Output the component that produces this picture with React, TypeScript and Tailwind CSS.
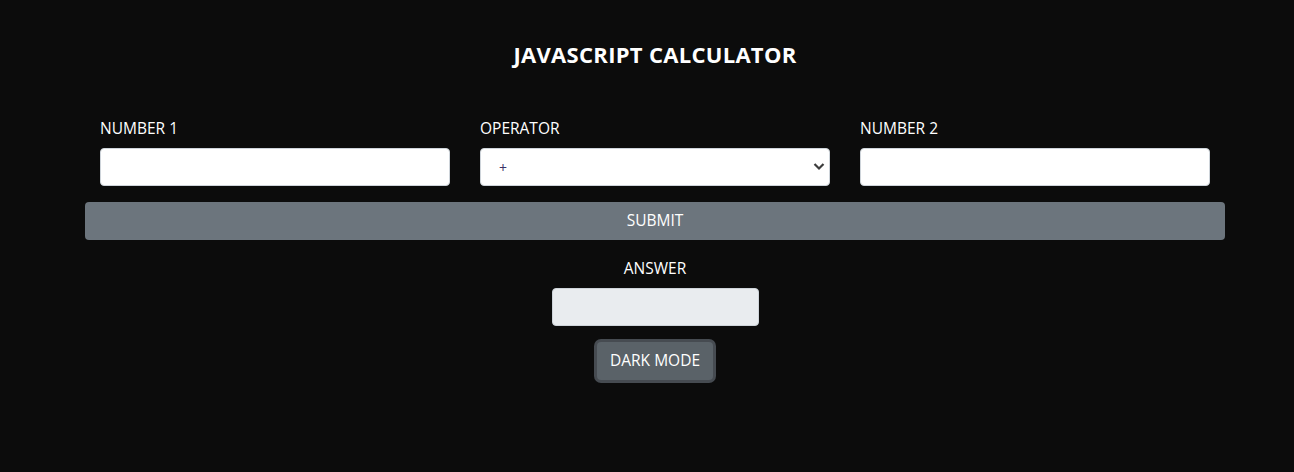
import { useState } from "react";

export default function App() {
  const [num1, setNum1] = useState("");
  const [num2, setNum2] = useState("");
  const [op, setOp] = useState("+");
  const [answer, setAnswer] = useState("");

  const handleSubmit = () => {
    const a = Number(num1);
    const b = Number(num2);
    let r = 0;
    if (op === "+") r = a + b;
    else if (op === "-") r = a - b;
    else if (op === "*") r = a * b;
    else r = a / b;
    setAnswer(String(r));
  };

  return (
    <div
      className="min-h-[472px] w-full bg-[#0c0c0c] text-white"
      style={{ fontFamily: '"Open Sans", "Noto Sans", sans-serif' }}
    >
      <div className="ml-[85px] w-[1140px] pt-[39px]">
        <h1 className="text-center text-[22px] font-bold leading-[30px] tracking-[0.3px]">JAVASCRIPT CALCULATOR</h1>

        <div className="mt-[47px] grid grid-cols-3">
          <div className="px-[15px]">
            <label className="block text-[15.5px] leading-[24px]">NUMBER 1</label>
            <input
              type="number"
              value={num1}
              onChange={(e) => setNum1(e.target.value)}
              className="mt-[8px] h-[38px] w-full rounded-[4px] border border-[#ced4da] bg-white px-3 text-black outline-none"
            />
          </div>
          <div className="px-[15px]">
            <label className="block text-[15.5px] leading-[24px]">OPERATOR</label>
            <div className="relative mt-[8px]">
              <select
                value={op}
                onChange={(e) => setOp(e.target.value)}
                className="h-[38px] w-full appearance-none rounded-[4px] border border-[#ced4da] bg-white pl-[18px] text-[14px] text-[#3b3266] outline-none"
              >
                <option value="+">+</option>
                <option value="-">-</option>
                <option value="*">*</option>
                <option value="/">/</option>
              </select>
              <svg
                className="pointer-events-none absolute right-[5px] top-[14px]"
                width="12"
                height="9"
                viewBox="0 0 12 9"
              >
                <path d="M1.5 2 L6 6.5 L10.5 2" stroke="#3c3c3c" strokeWidth="2.2" fill="none" />
              </svg>
            </div>
          </div>
          <div className="px-[15px]">
            <label className="block text-[15.5px] leading-[24px]">NUMBER 2</label>
            <input
              type="number"
              value={num2}
              onChange={(e) => setNum2(e.target.value)}
              className="mt-[8px] h-[38px] w-full rounded-[4px] border border-[#ced4da] bg-white px-3 text-black outline-none"
            />
          </div>
        </div>

        <button
          onClick={handleSubmit}
          className="mt-[16px] h-[38px] w-full rounded-[4px] bg-[#6c757d] text-[15.5px] text-white"
        >
          SUBMIT
        </button>

        <div className="mt-[16px] flex flex-col items-center">
          <label className="text-[15.5px] leading-[24px]">ANSWER</label>
          <input
            disabled
            value={answer}
            readOnly
            className="mt-[8px] h-[38px] w-[207px] rounded-[4px] border border-[#ced4da] bg-[#e9ecef] px-3 text-center text-black"
          />
          <button className="mt-[16px] h-[38px] rounded-[4px] bg-[#5a6268] px-[13px] text-[15.5px] text-white shadow-[0_0_0_3px_#464b51]">
            DARK MODE
          </button>
        </div>
      </div>
    </div>
  );
}
